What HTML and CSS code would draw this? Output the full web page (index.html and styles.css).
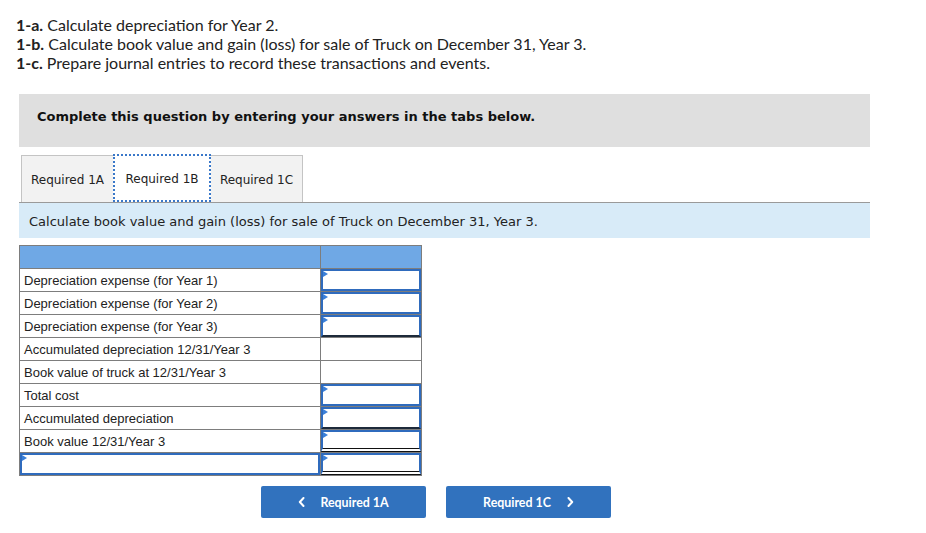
FILE: index.html
```html
<!DOCTYPE html>
<html>
<head>
<meta charset="utf-8">
<link rel="stylesheet" href="styles.css">
</head>
<body>
<div class="intro">
  <p><b>1-a.</b> Calculate depreciation for Year 2.</p>
  <p><b>1-b.</b> Calculate book value and gain (loss) for sale of Truck on December 31, Year 3.</p>
  <p><b>1-c.</b> Prepare journal entries to record these transactions and events.</p>
</div>
<div class="wrap">
  <div class="banner">Complete this question by entering your answers in the tabs below.</div>
  <div class="tabs">
    <div class="tab">Required 1A</div>
    <div class="tab active">Required 1B</div>
    <div class="tab">Required 1C</div>
  </div>
  <div class="prompt">Calculate book value and gain (loss) for sale of Truck on December 31, Year 3.</div>
  <table class="grid">
    <tr class="head"><td class="lbl"></td><td class="val"></td></tr>
    <tr><td class="lbl">Depreciation expense (for Year 1)</td><td class="val"><div class="inp"></div></td></tr>
    <tr><td class="lbl">Depreciation expense (for Year 2)</td><td class="val"><div class="inp"></div></td></tr>
    <tr><td class="lbl">Depreciation expense (for Year 3)</td><td class="val"><div class="inp sum"></div></td></tr>
    <tr><td class="lbl">Accumulated depreciation 12/31/Year 3</td><td class="val"></td></tr>
    <tr><td class="lbl">Book value of truck at 12/31/Year 3</td><td class="val"></td></tr>
    <tr><td class="lbl">Total cost</td><td class="val"><div class="inp"></div></td></tr>
    <tr><td class="lbl">Accumulated depreciation</td><td class="val"><div class="inp sum"></div></td></tr>
    <tr><td class="lbl">Book value 12/31/Year 3</td><td class="val"><div class="inp dbl"></div></td></tr>
    <tr><td class="lbl blank"><div class="inp"></div></td><td class="val"><div class="inp dbl"></div></td></tr>
  </table>
  <div class="nav">
    <div class="btn"><svg class="chev left" width="7" height="10" viewBox="0 0 7 10"><path d="M5.5 1 L1.8 5 L5.5 9" fill="none" stroke="#fff" stroke-width="2" stroke-linecap="round" stroke-linejoin="round"/></svg>Required 1A</div>
    <div class="btn">Required 1C<svg class="chev right" width="7" height="10" viewBox="0 0 7 10"><path d="M1.5 1 L5.2 5 L1.5 9" fill="none" stroke="#fff" stroke-width="2" stroke-linecap="round" stroke-linejoin="round"/></svg></div>
  </div>
</div>
</body>
</html>
```
FILE: styles.css
```css
html, body {
  margin: 0;
  padding: 0;
  background: #fff;
}
body {
  font-family: "Lato", "Liberation Sans", sans-serif;
  color: #222;
}
.intro {
  padding: 15px 0 0 16px;
  font-size: 16px;
  line-height: 19px;
}
.intro p {
  margin: 0;
}
.intro b {
  font-weight: 700;
}
.wrap {
  margin: 22px 0 0 19px;
  width: 851px;
}
.banner {
  background: #dfdfdf;
  height: 53px;
  box-sizing: border-box;
  padding: 15px 0 0 18px;
  font-family: "DejaVu Sans", Verdana, sans-serif;
  font-weight: bold;
  font-size: 13px;
  color: #111;
}
.tabs {
  display: flex;
  margin: 8px 0 0 2px;
  height: 47px;
}
.tab {
  box-sizing: border-box;
  height: 47px;
  padding: 2px 0 0;
  border: 1px solid #c4c4c4;
  border-bottom: none;
  background: #f2f2f2;
  font-family: "DejaVu Sans", Verdana, sans-serif;
  font-size: 12px;
  color: #222;
  display: flex;
  align-items: center;
  justify-content: center;
  white-space: nowrap;
  width: 93px;
}
.tab.active {
  background: #fff;
  border: 2px dotted #3a78c9;
  height: 48px;
  width: 98px;
  margin: -1px -1px 0 -1px;
  position: relative;
  z-index: 1;
}
.prompt {
  border-top: 1px solid #9a9a9a;
  background: #d8ebf8;
  height: 36px;
  box-sizing: border-box;
  padding: 11px 0 0 10px;
  font-family: "DejaVu Sans", Verdana, sans-serif;
  font-size: 13px;
  color: #222;
}
.grid {
  margin-top: 7px;
  border-collapse: collapse;
  width: 403px;
  font-family: "Liberation Sans", Arial, sans-serif;
  font-size: 13px;
  color: #222;
}
.grid td {
  border: 1px solid #7d7d7d;
  height: 23px;
  padding: 1px 0 0;
  box-sizing: border-box;
}
.grid .lbl {
  width: 302px;
  padding-left: 4px;
}
.grid .lbl.blank,
.grid .val {
  padding: 0;
}
.grid .val {
  width: 101px;
}
.grid .head td {
  background: #6fa8e5;
}
.inp {
  position: relative;
  height: 22px;
  box-sizing: border-box;
  border: 2px solid #2f6bbd;
  background: #fff;
}
.inp::before {
  content: "";
  position: absolute;
  left: 0;
  top: 0;
  border-left: 5px solid #3a7fd8;
  border-top: 3px solid transparent;
  border-bottom: 3px solid transparent;
}
.inp.sum {
  border-bottom: 2px solid #1d2a3a;
}
.inp.dbl {
  border-bottom: 4px double #111;
}
.nav {
  display: flex;
  margin: 10px 0 0 242px;
  gap: 20px;
}
.btn {
  width: 165px;
  height: 32px;
  background: #3172be;
  border-radius: 2px;
  color: #fff;
  font-family: "Lato", "Liberation Sans", sans-serif;
  font-weight: 700;
  font-size: 12.4px;
  display: flex;
  align-items: center;
  justify-content: center;
}
.chev.left {
  margin-right: 15px;
}
.chev.right {
  margin-left: 16px;
}
```
